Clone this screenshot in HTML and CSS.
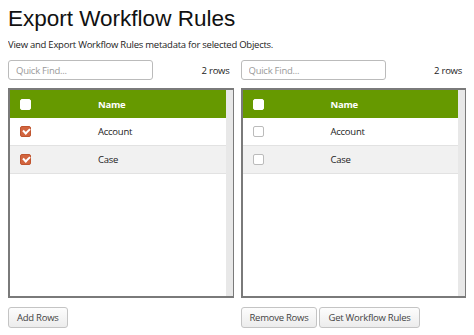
FILE: index.html
```html
<!DOCTYPE html>
<html lang="en">

<head>
    <meta charset="UTF-8">
    <title>Export Workflow Rules</title>
    <link rel="stylesheet" href="styles.css">
</head>

<body>
    <h1 class="title">Export Workflow Rules</h1>
    <p class="intro">View and Export Workflow Rules metadata for selected Objects.</p>
    <div class="panels">
        <div class="panel">
            <div class="toolbar">
                <input class="find" type="text" placeholder="Quick Find...">
                <span class="count">2 rows</span>
            </div>
            <div class="grid">
                <div class="grid-body">
                    <div class="row head">
                        <span class="cell-check"><span class="box"></span></span>
                        <span class="cell-name">Name</span>
                    </div>
                    <div class="row">
                        <span class="cell-check"><span class="box on"></span></span>
                        <span class="cell-name">Account</span>
                    </div>
                    <div class="row alt">
                        <span class="cell-check"><span class="box on"></span></span>
                        <span class="cell-name">Case</span>
                    </div>
                </div>
                <div class="gutter"></div>
            </div>
            <div class="actions">
                <button class="btn">Add Rows</button>
            </div>
        </div>
        <div class="panel">
            <div class="toolbar">
                <input class="find" type="text" placeholder="Quick Find...">
                <span class="count">2 rows</span>
            </div>
            <div class="grid">
                <div class="grid-body">
                    <div class="row head">
                        <span class="cell-check"><span class="box"></span></span>
                        <span class="cell-name">Name</span>
                    </div>
                    <div class="row">
                        <span class="cell-check"><span class="box"></span></span>
                        <span class="cell-name">Account</span>
                    </div>
                    <div class="row alt">
                        <span class="cell-check"><span class="box"></span></span>
                        <span class="cell-name">Case</span>
                    </div>
                </div>
                <div class="gutter"></div>
            </div>
            <div class="actions">
                <button class="btn">Remove Rows</button>
                <button class="btn">Get Workflow Rules</button>
            </div>
        </div>
    </div>
</body>

</html>
```

FILE: styles.css
```css
body {
    margin: 8px;
    font-family: "Open Sans", "Noto Sans", sans-serif;
    font-size: 9.5px;
    letter-spacing: -0.25px;
    color: #222;
}

.title {
    margin: 0;
    font-family: "Liberation Sans", Arial, sans-serif;
    font-weight: normal;
    font-size: 22.5px;
    line-height: 22px;
    letter-spacing: 0;
    color: #111;
}

.intro {
    margin: 7px 0 0;
    line-height: 16px;
}

.panels {
    display: grid;
    grid-template-columns: 1fr 1fr;
    gap: 7px;
    margin-top: 7px;
}

.toolbar {
    display: flex;
    align-items: center;
    justify-content: space-between;
    height: 20px;
}

.find {
    box-sizing: border-box;
    width: 145px;
    height: 20px;
    margin: 0;
    padding: 0 7px;
    border: 1px solid #bbb;
    border-radius: 3px;
    font-family: inherit;
    font-size: 9.5px;
    letter-spacing: -0.25px;
    outline: none;
}

.find::placeholder {
    color: #9a9a9a;
}

.count {
    padding-right: 4px;
}

.grid {
    display: flex;
    box-sizing: border-box;
    height: 210px;
    margin-top: 8px;
    border: 2px solid #7a7a7a;
    border-right-width: 1px;
    background: #fff;
}

.grid-body {
    flex: 1;
}

.gutter {
    width: 7px;
    background: #e8e8e8;
}

.row {
    display: flex;
    align-items: center;
    height: 27px;
    border-bottom: 1px solid #e2e2e2;
}

.row.alt {
    background: #f1f1f1;
}

.row.head {
    height: 28px;
    border-bottom: 0;
    background: #669900;
    color: #fff;
    font-weight: bold;
}

.cell-check {
    width: 88px;
    padding-left: 10px;
    box-sizing: border-box;
}

.box {
    display: block;
    box-sizing: border-box;
    width: 11px;
    height: 11px;
    border: 1px solid #bbb;
    border-radius: 2px;
    background: #fff;
}

.head .box {
    border-color: #fff;
}

.box.on {
    position: relative;
    border-color: #c0552f;
    background: #d2653f;
}

.box.on::after {
    content: "";
    position: absolute;
    left: 2px;
    top: 1px;
    width: 5px;
    height: 3px;
    border-left: 2px solid #fff;
    border-bottom: 2px solid #fff;
    transform: rotate(-45deg);
}

.actions {
    display: flex;
    gap: 2px;
    margin-top: 9px;
}

.btn {
    height: 21px;
    padding: 0 8px;
    border: 1px solid #c4c4c4;
    border-radius: 3px;
    background: linear-gradient(#fdfdfd, #ececec);
    font-family: inherit;
    font-size: 9.5px;
    letter-spacing: -0.25px;
    color: #444;
}
```
